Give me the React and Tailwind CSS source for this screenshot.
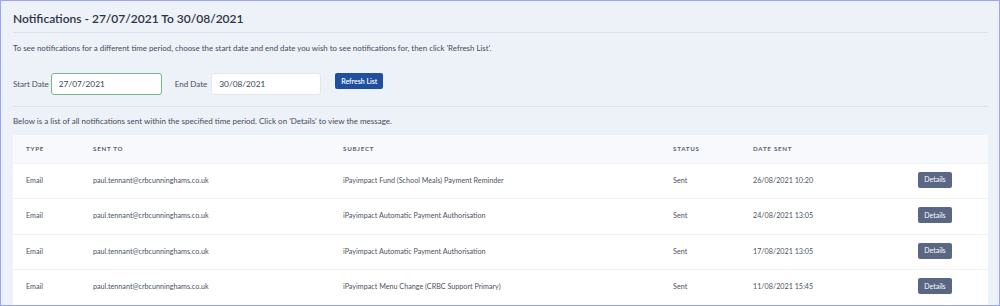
import React from 'react';

const rows = [
  { type: 'Email', to: 'paul.tennant@crbcunninghams.co.uk', subject: 'iPayimpact Fund (School Meals) Payment Reminder', status: 'Sent', date: '26/08/2021 10:20' },
  { type: 'Email', to: 'paul.tennant@crbcunninghams.co.uk', subject: 'iPayimpact Automatic Payment Authorisation', status: 'Sent', date: '24/08/2021 13:05' },
  { type: 'Email', to: 'paul.tennant@crbcunninghams.co.uk', subject: 'iPayimpact Automatic Payment Authorisation', status: 'Sent', date: '17/08/2021 13:05' },
  { type: 'Email', to: 'paul.tennant@crbcunninghams.co.uk', subject: 'iPayimpact Menu Change (CRBC Support Primary)', status: 'Sent', date: '11/08/2021 15:45' },
];

export default function App(){
  return (
    <div className="h-[306px] w-[1000px] overflow-hidden border border-[#9ca3f3] bg-[#edf1f8] text-[#3c4356]" style={{fontFamily: 'Lato, "Open Sans", sans-serif'}}>
      <div className="pl-[12px] pr-[11px]">
        <h2 className="pt-[9px] pb-[4px] text-[12px] font-semibold text-[#2c3345]">Notifications - 27/07/2021 To 30/08/2021</h2>
        <div className="border-t border-[#d7e1f0]" />
        <p className="mt-[10px] text-[7.9px] text-[#454b5c]">To see notifications for a different time period, choose the start date and end date you wish to see notifications for, then click 'Refresh List'.</p>

        <div className="mt-[18px] flex items-center text-[8px] text-[#4a5062]">
          <span>Start Date</span>
          <input className="ml-[2px] h-[22px] w-[111px] rounded-[3px] border border-[#74b98a] bg-white px-[7px] text-[8.3px] text-[#3c4356] outline-none" defaultValue="27/07/2021" />
          <span className="ml-[13px]">End Date</span>
          <input className="ml-[4px] h-[22px] w-[110px] rounded-[3px] border border-[#e3e8f0] bg-white px-[7px] text-[8.3px] text-[#3c4356] outline-none" defaultValue="30/08/2021" />
          <button className="mb-[5px] ml-[14px] h-[16px] w-[48px] rounded-[2px] bg-[#1f4f9e] text-[7px] font-semibold text-white">Refresh List</button>
        </div>

        <div className="mt-[11px] border-t border-[#d7e1f0]" />
        <p className="mt-[8px] text-[8px] text-[#454b5c]">Below is a list of all notifications sent within the specified time period. Click on 'Details' to view the message.</p>

        <div className="mt-[8px] bg-white">
          <div className="flex h-[28px] items-center bg-[#f8f9fc] text-[6.2px] font-bold tracking-[0.12em] text-[#5a6070]">
            <div className="w-[80px] pl-[13px]">TYPE</div>
            <div className="w-[250px]">SENT TO</div>
            <div className="w-[330px]">SUBJECT</div>
            <div className="w-[80px]">STATUS</div>
            <div>DATE SENT</div>
          </div>
          {rows.map((r, i) => (
            <div key={i} className="flex h-[35.5px] items-center border-t border-[#f0f2f6] text-[7.2px] text-[#4d5364]">
              <div className="w-[80px] pl-[13px]">{r.type}</div>
              <div className="w-[250px]">{r.to}</div>
              <div className="w-[330px]">{r.subject}</div>
              <div className="w-[80px]">{r.status}</div>
              <div className="w-[165px]">{r.date}</div>
              <button className="mb-[3px] h-[16px] w-[34px] rounded-[2px] bg-[#5a6784] text-[7px] text-white">Details</button>
            </div>
          ))}
        </div>
      </div>
    </div>
  );
}
